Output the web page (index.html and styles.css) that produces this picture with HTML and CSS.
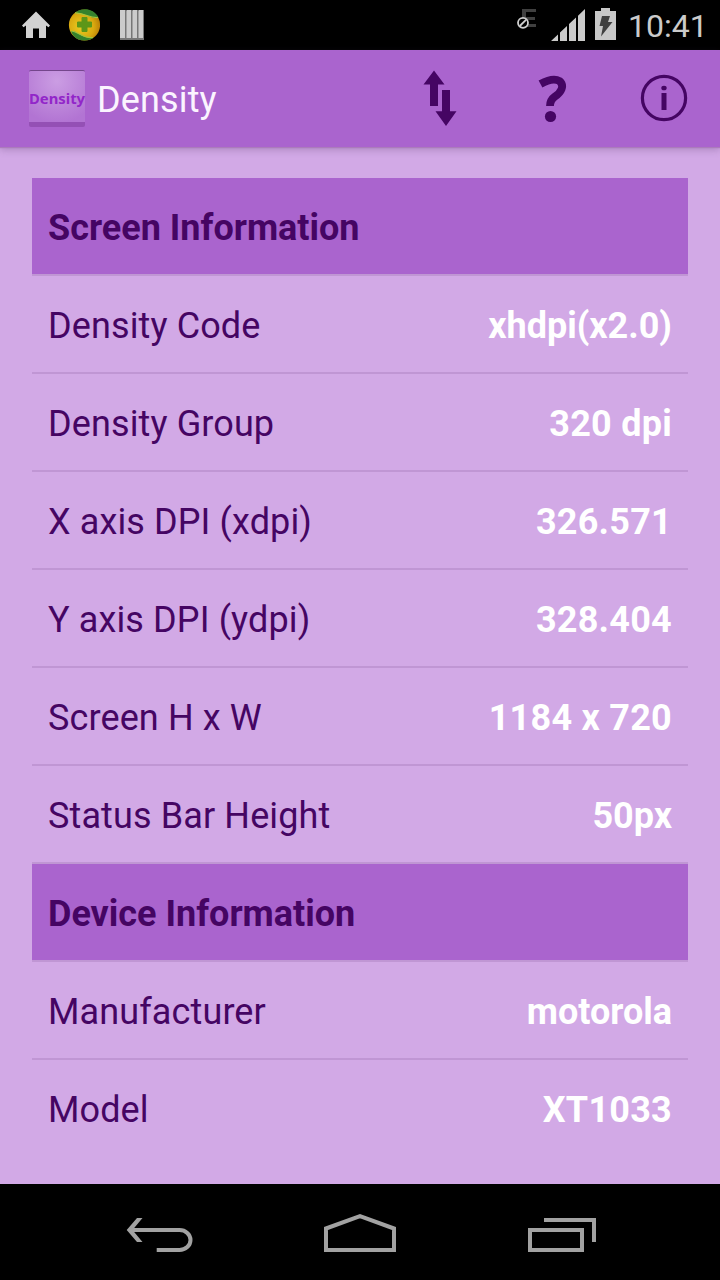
FILE: index.html
```html
<!DOCTYPE html>
<html lang="en">
<head>
<meta charset="utf-8">
<title>Density</title>
<link rel="stylesheet" href="styles.css">
</head>
<body>
<div class="screen">
  <div class="status-bar">
    <div class="status-left">
      <svg width="30" height="30" viewBox="21 10 30 30"><path d="M36 11.500 50 25.500 48.500 27.200 46 25.500V38H39V28.500H33V38H26V25.500L23.500 27.200 22 25.500Z" fill="#d2d2d2"/></svg>
      <svg class="ball" width="32" height="34" viewBox="68 8 32 34">
        <defs><radialGradient id="gold" cx=".4" cy=".55" r=".62"><stop offset="0" stop-color="#eccd22"/><stop offset=".65" stop-color="#d8a80f"/><stop offset="1" stop-color="#b87d06"/></radialGradient></defs>
        <circle cx="84.500" cy="25" r="15.600" fill="url(#gold)"/>
        <path d="M75 12.500C82 7 94 8 98.500 17.500 92 20 88 13.500 75 12.500Z" fill="#35822d"/>
        <path d="M71 31C78 30 81 39.500 94 37.500 86 43 74 41 71 31Z" fill="#35822d"/>
        <path d="M75 12.800C85 13 90 18.500 98 17.500M71 31C78 31 83 39 93 37.500" fill="none" stroke="#a5c43c" stroke-width="1.200"/>
        <path d="M82 17.500h5v4.500h4.500v5H87v4.500h-5V27h-4.500v-5H82Z" fill="#5d9618" stroke="#5d9618" stroke-width="1" stroke-linejoin="round"/>
      </svg>
      <svg width="24" height="30" viewBox="0 0 24 30"><path d="M1 0h5v30H0V1ZM7 0h5v30H6V1ZM13 0h5v30h-6V1ZM19 0h5v30h-6V1Z" fill="#777"/><path d="M0 0h5v28H0ZM6.500 0h4.500v28H6.500ZM12.500 0h4.500v28h-4.500ZM18.500 0H23v28h-4.500Z" fill="#cbcbcb"/></svg>
    </div>
    <div class="status-right">
      <svg width="20" height="32" viewBox="516 9 20 32"><path d="M522 9h14v3h-10v5h9v3h-9v4h10v3h-14Z" fill="#404040"/><circle cx="523" cy="22.800" r="5" fill="#000" stroke="#d0d0d0" stroke-width="1.800"/><path d="m519.800 26 6.400-6.400" stroke="#d0d0d0" stroke-width="1.800"/></svg>
      <svg class="signal" width="34" height="32" viewBox="551 9 34 32"><path d="M551 41 558 34.400V41ZM560 32.500 567 26V41H560ZM569 24 576 17.500V41H569ZM578 15.700 585 9V41H578Z" fill="#cbcbcb"/></svg>
      <svg class="battery" width="21" height="32" viewBox="595 8 21 32"><path d="M601 8h9v3h6v29h-21V11h6Z" fill="#c8c8c8"/><path d="M602 16h8l-2 6h4.500l-11.500 14.500 2-10.500h-3.500Z" fill="#404040"/></svg>
      <span class="clock">10:41</span>
    </div>
  </div>
  <header class="action-bar">
    <div class="app-icon"><span>Density</span></div>
    <h1 class="app-title">Density</h1>
    <div class="actions">
      <svg width="34" height="58" viewBox="423 69 34 58"><path d="M434 70.500 444.500 84.500H438V106h-8V84.500h-6.500ZM442 90h8v21.200h6.500L446 126 435.500 111.200H442Z" fill="#450563"/></svg>
      <svg width="34" height="50" viewBox="535 72 34 50"><path d="M540.500 83Q553 76 559.500 80C565 85 561 91.500 555 95.500Q550 99 550 105" fill="none" stroke="#450563" stroke-width="7.800"/><circle cx="550.500" cy="115.500" r="5.600" fill="#450563"/></svg>
      <svg width="48" height="48" viewBox="640 74 48 48"><circle cx="664" cy="98" r="21.600" fill="none" stroke="#450563" stroke-width="3.200"/><path d="M661.500 93h5v17h-5Z" fill="#450563"/><ellipse cx="664" cy="88" rx="2.700" ry="2.300" fill="#450563"/></svg>
    </div>
  </header>
  <main class="content">
    <h2 class="section">Screen Information</h2>
    <div class="row"><span>Density Code</span><b>xhdpi(x2.0)</b></div>
    <div class="row"><span>Density Group</span><b class="num">320 dpi</b></div>
    <div class="row"><span>X axis DPI (xdpi)</span><b class="num">326.571</b></div>
    <div class="row"><span>Y axis DPI (ydpi)</span><b class="num">328.404</b></div>
    <div class="row"><span>Screen H x W</span><b class="num">1184 x 720</b></div>
    <div class="row"><span>Status Bar Height</span><b>50px</b></div>
    <h2 class="section">Device Information</h2>
    <div class="row"><span>Manufacturer</span><b>motorola</b></div>
    <div class="row last"><span>Model</span><b class="num">XT1033</b></div>
  </main>
  <nav class="nav-bar">
    <svg width="68" height="40" viewBox="126 1214 68 40"><path d="M131 1230H179.500a11 10 0 0 1 0 20H156.700" fill="none" stroke="#a2a2a2" stroke-width="4"/><path d="M137 1218h5.500L132.500 1230 142.500 1242H137L126.700 1230Z" fill="#a2a2a2"/></svg>
    <svg class="home" width="72" height="40" viewBox="324 1214 72 40"><path d="M326 1228.500 360 1216.200 394 1228.500V1250H326Z" fill="none" stroke="#a2a2a2" stroke-width="4"/></svg>
    <svg width="68" height="40" viewBox="528 1214 68 40"><path d="M530 1230h52v20h-52ZM544 1220h50v22" fill="none" stroke="#a2a2a2" stroke-width="4"/></svg>
  </nav>
</div>
</body>
</html>
```
FILE: styles.css
```css
* { box-sizing: border-box; }
body { margin: 0; background: #d2a9e6; }
svg { display: block; flex: none; }
.screen {
  width: 720px;
  height: 1280px;
  display: flex;
  flex-direction: column;
  overflow: hidden;
  font-family: Roboto, "Noto Sans", sans-serif;
  color: #450563;
}
.status-bar {
  height: 50px;
  flex: none;
  background: #000;
  display: flex;
  align-items: center;
  justify-content: space-between;
  padding: 0 14px 0 21px;
}
.status-left { display: flex; align-items: center; gap: 17px; }
.status-left svg:last-child { margin-left: 3px; }
.status-right { display: flex; align-items: center; }
.signal { margin-left: 15px; }
.battery { margin: 0 12px 2px 10px; }
.clock { width: 78px; font-size: 32px; line-height: 50px; color: #cbcbcb; white-space: nowrap; padding-top: 1px; }
.action-bar {
  height: 97px;
  flex: none;
  background: #aa64ce;
  display: flex;
  align-items: center;
  padding: 0 32px 0 29px;
  box-shadow: 0 1px 1px #ab7bbb, 0 3px 7px rgba(90, 60, 110, .3);
}
.app-icon {
  width: 56px;
  height: 57px;
  border-top: 1px solid #74468c;
  border-bottom: 5px solid #9450b5;
  border-radius: 2px;
  background: radial-gradient(circle at 50% 20%, #cb9de3, #b274d3 85%);
  display: flex;
  align-items: center;
  justify-content: center;
  font: bold 14.8px "Noto Sans", sans-serif;
  padding-top: 2px;
  color: #9226c9;
}
.app-title { margin: 2px 0 0 12px; font-size: 36px; font-weight: 400; letter-spacing: .15px; color: #fbf4ff; }
.actions { margin: 0 0 2px auto; display: flex; align-items: center; gap: 78px; }
.actions svg:last-child { margin-left: -7px; }
.content { flex: 1; padding: 31px 32px 0; }
.section, .row {
  height: 98px;
  margin: 0;
  padding: 3px 16px 0;
  display: flex;
  align-items: center;
  justify-content: space-between;
  border-bottom: 2px solid #c096d4;
  font-size: 36px;
  line-height: 42px;
}
.section { background: #aa64ce; background-clip: padding-box; font-weight: 700; }
.row span { letter-spacing: .12px; }
.row b { color: #fff; font-weight: 700; }
.row .num { letter-spacing: .25px; }
.last { border-color: transparent; }
.nav-bar {
  height: 96px;
  flex: none;
  background: #000;
  display: flex;
  align-items: center;
  justify-content: space-between;
  padding: 4px 124px 0 126px;
}
.home { margin-right: 2px; }
```
